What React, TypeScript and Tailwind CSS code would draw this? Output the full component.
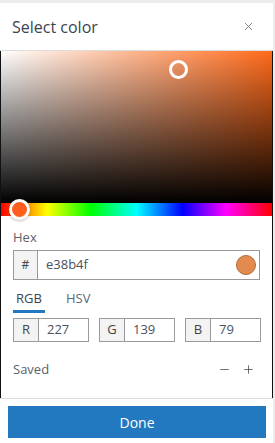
import { useState } from "react";
import { X, Minus, Plus } from "lucide-react";
import clsx from "clsx";

const font = "font-['Open_Sans','Noto_Sans',sans-serif]";

export default function App() {
  const [tab, setTab] = useState<"rgb" | "hsv">("rgb");

  return (
    <div className={clsx("w-[275px] h-[443px] bg-[#ececec] pt-[3px] overflow-hidden", font)}>
      <div className="w-[273px] h-[440px] bg-white flex flex-col">
        {/* Header */}
        <div className="h-[48px] flex items-center justify-between pl-[12px] pr-[18px] border-b border-[#dcdcdc]">
          <h3 className="text-[16px] text-[#3a4452]">Select color</h3>
          <X size={13} strokeWidth={1.5} className="text-[#6b6b6b]" />
        </div>

        {/* Picker */}
        <div className="flex-1 flex flex-col border-x border-[#111]">
          <div className="relative h-[152px] bg-[linear-gradient(to_bottom,transparent,#000),linear-gradient(to_right,#fff,#ff6a1a)]">
            <span className="absolute left-[168px] top-[9px] w-[19px] h-[19px] rounded-full border-[3px] border-white" />
          </div>
          <div className="relative h-[13px] bg-[linear-gradient(to_right,#f00,#ff0_17%,#0f0_33%,#0ff_50%,#00f_67%,#f0f_83%,#f00)]">
            <span className="absolute left-[8px] top-[-4px] w-[21px] h-[21px] rounded-full border-[3px] border-white bg-[#ff5e1f] shadow-[0_1px_3px_rgba(0,0,0,0.25)]" />
          </div>

          <div className="px-[12px] pt-[12px]">
            <p className="text-[13px] leading-[18px] text-[#5a5f6a]">Hex</p>
            <div className="mt-[4px] flex h-[30px] border border-[#9a9a9a]">
              <span className="w-[24px] flex items-center justify-center bg-[#f3f3f3] border-r border-[#9a9a9a] text-[12px] text-[#444]">
                #
              </span>
              <span className="flex-1 flex items-center pl-[8px] text-[13px] text-[#4a5160]">e38b4f</span>
              <span className="w-[20px] h-[20px] self-center mr-[3px] rounded-full bg-[#e38b4f] border border-[#b06a3c]" />
            </div>

            <div className="mt-[9px] flex gap-[21px] text-[13px] leading-[18px]">
              <button
                type="button"
                onClick={() => setTab("rgb")}
                className={clsx(
                  "w-[32px] pb-[3px] border-b-[3px]",
                  tab === "rgb" ? "border-[#2279c0] text-[#3a4452]" : "border-transparent text-[#6b7280]"
                )}
              >
                RGB
              </button>
              <button
                type="button"
                onClick={() => setTab("hsv")}
                className={clsx(
                  "pb-[3px] border-b-[3px]",
                  tab === "hsv" ? "border-[#2279c0] text-[#3a4452]" : "border-transparent text-[#5b6575]"
                )}
              >
                HSV
              </button>
            </div>

            <div className="mt-[5px] flex gap-[10px] w-[248px]">
              {[
                ["R", "227"],
                ["G", "139"],
                ["B", "79"],
              ].map(([label, value]) => (
                <div key={label} className="flex-1 flex h-[24px] border border-[#9a9a9a]">
                  <span className="w-[25px] flex items-center justify-center bg-[#f3f3f3] border-r border-[#9a9a9a] text-[13px] text-[#444]">
                    {label}
                  </span>
                  <span className="flex-1 flex items-center pl-[8px] text-[13px] text-[#4a5160]">{value}</span>
                </div>
              ))}
            </div>

            <div className="mt-[18px] flex items-center justify-between leading-[18px]">
              <span className="text-[13px] text-[#5a5f6a]">Saved</span>
              <div className="flex items-center gap-[11px] pr-[5px] text-[#333]">
                <Minus size={13} strokeWidth={1.3} />
                <Plus size={13} strokeWidth={1.3} />
              </div>
            </div>
          </div>
        </div>

        {/* Footer */}
        <div className="border-t border-[#dcdcdc] px-[8px] pt-[7px] pb-[5px]">
          <button
            type="button"
            className="w-[258px] h-[32px] bg-[#2279c0] text-white text-[14px]"
          >
            Done
          </button>
        </div>
      </div>
    </div>
  );
}
